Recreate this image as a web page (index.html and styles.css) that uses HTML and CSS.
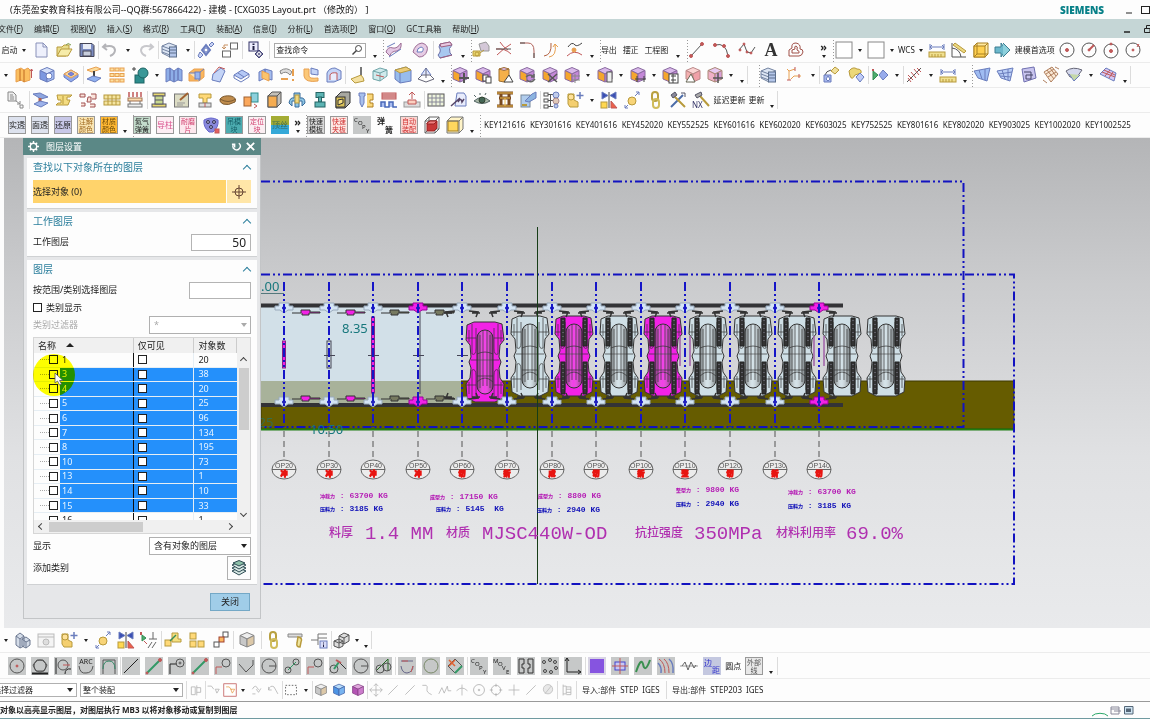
FILE: index.html
```html
<!DOCTYPE html>
<html lang="zh-CN">
<head>
<meta charset="utf-8">
<title>建模 - CXG035 Layout.prt</title>
<link rel="stylesheet" href="styles.css">
</head>
<body>
<header class="titlebar">
  <h1 class="title">(东莞盈安教育科技有限公司--QQ群:567866422) - 建模 - [CXG035 Layout.prt （修改的） ]</h1>
  <span class="brand">SIEMENS</span>
  <button class="win" aria-label="最小化"><svg viewBox="0 0 10 10"><path d="M2 8H8" stroke="#222"/></svg></button>
  <button class="win" aria-label="最大化"><svg viewBox="0 0 10 10"><rect x="1.500" y="1.500" width="8" height="7" fill="none" stroke="#222"/></svg></button>
</header>
<nav class="menubar">
  <a href="#">文件(<u>F</u>)</a><a href="#">编辑(<u>E</u>)</a><a href="#">视图(<u>V</u>)</a><a href="#">插入(<u>S</u>)</a><a href="#">格式(<u>R</u>)</a><a href="#">工具(<u>T</u>)</a><a href="#">装配(<u>A</u>)</a><a href="#">信息(<u>I</u>)</a><a href="#">分析(<u>L</u>)</a><a href="#">首选项(<u>P</u>)</a><a href="#">窗口(<u>O</u>)</a><a href="#">GC工具箱</a><a href="#">帮助(<u>H</u>)</a>
  <span class="spacer"></span>
  <button class="win" aria-label="最小化文档"><svg viewBox="0 0 10 10"><path d="M2 8H8" stroke="#222" stroke-width="1.500"/></svg></button>
  <button class="win" aria-label="还原文档"><svg viewBox="0 0 10 10"><path d="M1.500 4.500H7V8.500H1.500ZM3.500 4V1.500H9.500V6H7" fill="none" stroke="#222"/></svg></button>
</nav>

<div class="bar bar1">
  <div class="group" data-tools="=启动 v new open save"></div>
  <div class="group" data-tools="undo v redo"></div>
  <div class="group" data-tools="layers v"></div>
  <div class="group" data-tools="orient window"></div>
  <div class="group" data-tools="info"></div>
  <div class="group find">
    <label class="search"><input type="text" value="查找命令" aria-label="查找命令"><svg viewBox="0 0 12 12"><circle cx="7.500" cy="4.500" r="3" fill="none" stroke="#444"/><path d="M5.500 6.500L1.500 10.500" stroke="#444" stroke-width="1.500"/></svg></label>
    <button class="caret low" aria-label="更多"></button>
  </div>
  <div class="group grip" data-tools="sheet ring"></div>
  <div class="group" data-tools="sweep V"></div>
  <div class="group grip" data-tools="trim cross corner offset curves V"></div>
  <div class="group grip" data-tools="=导出 =摆正 =工程图 V"></div>
  <div class="group grip" data-tools="line arc spline letter profile . »"></div>
  <div class="group grip" data-tools="blank v blank v =WCS v ruler angle bbox goto =建模首选项 circ1 circ2 circ3 circ4"></div>
</div>
<div class="bar bar2">
  <div class="group" data-tools="v extrude hole pocket"></div>
  <div class="group" data-tools="datum pattern unite v book block draft slab divide sew blend shell"></div>
  <div class="group" data-tools="bend step wall cone V"></div>
  <div class="group grip" data-tools="cubeMove cubeCopy cylinder cubeTurn cubeCut cubeTrim v cubeBox v cubeDim v cubeSwap cubePink cubePlus v V"></div>
  <div class="group edge"></div>
  <div class="group grip" data-tools="layers axes v"></div>
  <div class="group" data-tools="wave link"></div>
  <div class="group" data-tools="play v"></div>
  <div class="group" data-tools="comb v ruler V"></div>
  <div class="group grip" data-tools="surf1 surf2 surf3 surf4 surf5 v surf6 V"></div>
  <div class="group edge"></div>
</div>
<div class="bar bar3">
  <div class="group" data-tools="doc"></div>
  <div class="group" data-tools="press strip parts plates burner"></div>
  <div class="group" data-tools="frame sheetEdit tee puck swap mold clamp pin die bolt mesh lift"></div>
  <div class="group" data-tools="grid edit eye gate brush"></div>
  <div class="group" data-tools="tree add v mirror move chain tools hammer =延迟更新 =更新 V"></div>
  <div class="group edge"></div>
</div>
<div class="bar bar4">
  <div class="group" data-tools=". t1 t2 t3 t4 t5 V"></div>
  <div class="group grip" data-tools="t6 t7 t8 dots t9 t10 t11 »"></div>
  <div class="group grip" data-tools="t12 t13 copyT t14 t15 redcube goldcube V"></div>
  <div class="group grip keys" data-tools="=KEY121616 =KEY301616 =KEY401616 =KEY452020 =KEY552525 =KEY601616 =KEY602020 =KEY603025 =KEY752525 =KEY801616 =KEY802020 =KEY903025 =KEY1002020 =KEY1002525"></div>
</div>

<main class="canvas">
  <svg class="cad" id="cad" viewBox="0 138 1150 490" preserveAspectRatio="xMinYMin meet" role="img" aria-label="CXG035 料带排样">
    <defs>
      <linearGradient id="dome"><stop offset="0" stop-color="#333" stop-opacity=".65"/><stop offset=".45" stop-color="#fff" stop-opacity=".12"/><stop offset="1" stop-color="#333" stop-opacity=".6"/></linearGradient>
      <g id="part" stroke="#333">
        <path d="M-18-37L-11-40H10L17-38L19-22L15-17L14-5L16 0L14 6L15 16L19 22L18 36L10 40H-10L-18 36L-19 22L-15 16L-14 6L-16 0L-14-5L-15-17L-19-22Z" fill="currentColor"/>
        <path d="M-14-2H14M-19-24H-9M9-24H18M-19 23H-9M9 23H18M-13-38V-8Q-9-6-9-14V-34M13-38V-8Q9-6 9-14V-34M-13 36V8Q-9 6-9 14V34M13 36V8Q9 6 9 14V34M-16-32V-20M16-32V-20M-16 20V32M16 20V32" fill="none" stroke-width=".700"/>
        <rect x="-8" y="-32" width="16" height="64" rx="8" fill="url(#dome)"/>
        <path d="M-5-27V26M-2-31V24M2-31V24M5-27V26M-8-8Q0-12 8-8M-8 14H8M-8 20Q0 12 8 20" fill="none" stroke-width=".700"/>
      </g>
      <g id="ribs" stroke="#222" fill="#333"><path d="M-13-38H-9V-10H-13ZM9-38H13V-10H9ZM-13 6H-9V38H-13ZM9 6H13V38H9Z"/><path d="M-11-36V-12M11-36V-12M-11 8V36M11 8V36" stroke="#889" stroke-dasharray="1 3"/></g>
    </defs>
    <path d="M261 381H1014V429H261Z" fill="#665c00" stroke="#3c3800"/>
    <path d="M261 306H461V381H261Z" fill="#d2e0e8"/>
    <path d="M261 381H461V404H261Z" fill="#a8b29a"/>
    <path d="M261 429.500H1014" stroke="#1f7d12" stroke-width="2"/>
    <path d="M261 305.500H843M261 405H843" stroke="#333336" stroke-width="4"/>
    <g id="parts"></g>
    <g id="stations"></g>
    <g class="dashdot"><path d="M261 181.500H963.500V427H261"/><path d="M261 274.500H1014V584H261"/></g>
    <path d="M537.500 227V584" stroke="#173d17"/>
    <path d="M261 293.500H284" stroke="#55787c"/>
    <g class="dim"><text x="261" y="291">.00</text><text x="342" y="333">8.35</text><text x="310" y="434">10.50</text><text x="255" y="427" opacity=".6">.25</text></g>
    <g class="force">
      <text x="320" y="498"><tspan class="cn">冲裁力</tspan> : 63700 KG</text><text x="430" y="499"><tspan class="cn">成型力</tspan> : 17150 KG</text><text x="538" y="498"><tspan class="cn">成型力</tspan> : 8800 KG</text><text x="676" y="492"><tspan class="cn">整型力</tspan> : 9800 KG</text><text x="788" y="494"><tspan class="cn">冲裁力</tspan> : 63700 KG</text>
    </g>
    <g class="force blue">
      <text x="320" y="511"><tspan class="cn">压料力</tspan> : 3185 KG</text><text x="436" y="511"><tspan class="cn">压料力</tspan> : 5145&#160; KG</text><text x="537" y="512"><tspan class="cn">压料力</tspan> : 2940 KG</text><text x="676" y="506"><tspan class="cn">压料力</tspan> : 2940 KG</text><text x="788" y="508"><tspan class="cn">压料力</tspan> : 3185 KG</text>
    </g>
    <g class="spec">
      <text class="cn" x="329" y="537">料厚</text><text x="365" y="539">1.4 MM</text><text class="cn" x="446" y="537">材质</text><text x="482" y="539">MJSC440W-OD</text><text class="cn" x="635" y="537">抗拉强度</text><text x="694" y="539">350MPa</text><text class="cn" x="776" y="537">材料利用率</text><text x="846" y="539">69.0%</text>
    </g>
  </svg>

  <section class="dialog" aria-label="图层设置">
    <header class="dlg-head">
      <svg viewBox="0 0 12 12"><circle cx="6" cy="6" r="3.500" fill="none" stroke="#fff" stroke-width="1.500"/><path d="M6 0V2.500M6 9.500V12M0 6H2.500M9.500 6H12M2 2L3.500 3.500M8.500 8.500L10 10M10 2L8.500 3.500M3.500 8.500L2 10" stroke="#fff" stroke-width="1.500"/></svg>
      <h2>图层设置</h2>
      <button aria-label="重置"><svg viewBox="0 0 12 12"><path d="M8.500 2.500A4 4 0 1 1 2.500 4M4 7V3.500H1" fill="none" stroke="#fff" stroke-width="1.500"/></svg></button>
      <button aria-label="关闭窗口"><svg viewBox="0 0 12 12"><path d="M2 2L10 10M10 2L2 10" stroke="#fff" stroke-width="2"/></svg></button>
    </header>
    <div class="panel">
      <h3>查找以下对象所在的图层<i></i></h3>
      <div class="pick"><button class="pick-label">选择对象 (0)</button><button class="pick-icon" aria-label="点选"><svg viewBox="0 0 16 16"><circle cx="8" cy="8" r="4" fill="none" stroke="#643"/><path d="M8 1V15M1 8H15" stroke="#643"/></svg></button></div>
    </div>
    <div class="panel">
      <h3>工作图层<i></i></h3>
      <div class="field"><label for="work">工作图层</label><input id="work" class="num" type="text" value="50"></div>
    </div>
    <div class="panel">
      <h3>图层<i></i></h3>
      <div class="field"><label for="range">按范围/类别选择图层</label><input id="range" type="text"></div>
      <label class="check"><input type="checkbox">类别显示</label>
      <div class="field dim-field"><label for="filter">类别过滤器</label><span class="pick-list"><select id="filter" disabled><option>*</option></select></span></div>
      <div class="list">
        <div class="rows">
          <table>
            <thead><tr><th>名称 <b class="up"></b></th><th>仅可见</th><th>对象数</th></tr></thead>
            <tbody id="layers"></tbody>
          </table>
        </div>
        <div class="vscroll"><i class="chev"></i><span></span><i class="chev down"></i></div>
        <div class="hscroll"><i class="chev left"></i><span></span><i class="chev right"></i></div>
        <div class="spot"></div>
        <svg class="pointer" viewBox="0 0 10 14"><path d="M1 1V11L3.500 9L5.500 13L7.500 12L5.500 8.500H9Z" fill="#fff" stroke="#555" stroke-width=".800"/></svg>
      </div>
      <div class="field"><label for="show">显示</label><span class="pick-list"><select id="show"><option>含有对象的图层</option></select></span></div>
      <div class="field add"><label for="addcat">添加类别</label><button id="addcat" class="stack"><svg viewBox="0 0 18 18"><g fill="#d8e8e4" stroke="#2c4a52"><path d="M2 12L9 9L16 12L9 16Z"/><path d="M2 9L9 6L16 9L9 13Z"/><path d="M2 6L9 3L16 6L9 10Z"/><path d="M3 4L9 1.500L15 4L9 7Z" fill="#8cc0a8"/></g></svg></button></div>
    </div>
    <footer><button class="close">关闭</button></footer>
  </section>
</main>

<div class="bar barA">
  <div class="group" data-tools="v assembly tab add v move mirror constrain"></div>
  <div class="group" data-tools="place blocks steps"></div>
  <div class="group" data-tools="graycube"></div>
  <div class="group" data-tools="chain chain2 fork"></div>
  <div class="group" data-tools="cubes v V"></div>
  <div class="group edge"></div>
</div>
<div class="bar barB">
  <div class="group" data-tools=". k1 k2 k3 k4 k5"></div>
  <div class="group" data-tools="k6 k7 k8 k7 k9 k10 k11 k12 k9 k13 k11 k14"></div>
  <div class="group" data-tools="k15 k16 k17"></div>
  <div class="group" data-tools="copyT moveT k18 k19 k20"></div>
  <div class="group" data-tools="violet k21 k22 k23 k24 side =圆点 t16 V"></div>
  <div class="group edge"></div>
</div>
<div class="bar barC">
  <span class="combo"><select aria-label="选择过滤器"><option>选择过滤器</option></select></span>
  <span class="combo"><select aria-label="范围"><option>整个装配</option></select></span>
  <div class="group small" data-tools="m1"></div>
  <div class="group small" data-tools="m2 m3 v m4 m5"></div>
  <div class="group small" data-tools="m6 v"></div>
  <div class="group small" data-tools="graycube bluecube pinkcube"></div>
  <div class="group small" data-tools="m7 m8 m8 m9 m10 m11 m12 m13 m14 m8 m15"></div>
  <div class="group small" data-tools="m16"></div>
  <div class="group start" data-tools="=导入:部件 =STEP =IGES"></div>
  <div class="group start" data-tools="=导出:部件 =STEP203 =IGES"></div>
</div>
<footer class="status">
  <span>对象以高亮显示图层，对图层执行 MB3 以将对象移动或复制到图层</span>
  <svg viewBox="0 0 44 14"><path d="M2 13A9 5 0 0 1 18 13" fill="none" stroke="#2ca86a"/><path d="M21 4H29V11H21ZM21 6H29M24 8H31" fill="none" stroke="#889"/><path d="M34.500 3.500H43V11H34.500Z" fill="#cfe4f2" stroke="#567"/><path d="M36 5.500H41V9H36Z" fill="#567"/></svg>
</footer>
<script src="app.js"></script>
</body>
</html>
```
FILE: styles.css
```css
* { box-sizing: border-box; }
body {
  margin: 0;
  height: 100vh;
  display: flex;
  flex-direction: column;
  overflow: hidden;
  background: #fdfdfd;
  color: #222;
  font: 8px/12px "Noto Sans", "Noto Sans CJK SC", sans-serif;
}
button, input, select { font: inherit; color: inherit; }
button { border: 0; background: none; padding: 0; }
h1, h2, h3 { margin: 0; font-weight: 400; }
svg { display: block; }

.titlebar { display: flex; align-items: center; height: 19px; flex: none; padding-left: 10px; }
.title { flex: 1; font-size: 9px; color: #111; }
.brand { color: #078088; font: 800 10px/12px "Open Sans", sans-serif; padding-right: 17px; }
.win { width: 16px; height: 12px; }
.win svg { width: 10px; height: 10px; margin: auto; }
.titlebar .win:last-child { margin-right: -3px; }
.menubar { display: flex; align-items: center; gap: 11px; height: 19px; flex: none; background: #c5d6d6; }
.menubar a { color: #222; text-decoration: none; white-space: nowrap; }
.menubar a:first-child { margin-left: -2px; }
.menubar .spacer { flex: 1; }
.menubar .win { margin-right: -6px; }

.bar { display: grid; height: 25px; flex: none; border-bottom: 1px solid #ececec; }
.bar1 { grid-template-columns: 98px 60px 36px 48px 27px 112px 52px 36px 129px 87px 146px 1fr; }
.bar2 { grid-template-columns: 83px 262px 104px 298px 10px 62px 49px 35px 67px 160px 1fr; }
.bar3 { grid-template-columns: 29px 118px 277px 116px 237px 1fr; }
.bar4 { grid-template-columns: 131px 173px 174px 1fr; }
.barA { grid-template-columns: 161px 72px 28px 70px 40px 1fr; }
.barB { grid-template-columns: 120px 275px 72px 118px 192px 1fr; height: 26px; }
.barC { grid-template-columns: 80px 106px 19px 77px 30px 55px 190px 19px 90px 1fr; height: 22px; border: 0; }
.group {
  display: flex;
  align-items: center;
  justify-content: space-around;
  min-width: 0;
  background: linear-gradient(#dcdcdc, #dcdcdc) left / 1px 18px no-repeat;
}
.group:first-child { background: none; }
.bar1 .group:last-child { padding: 0 6px 0 2px; }
.group.grip { background: radial-gradient(circle, #999 1px, transparent 1px) 1px 4px / 3px 3px repeat-y; }
.group.start { justify-content: flex-start; gap: 4px; padding-left: 6px; }
.group.keys { justify-content: space-between; padding: 0 19px 0 6px; }
.tool { width: 20px; height: 20px; flex: none; display: grid; place-items: center; }
.tool svg { width: 18px; height: 18px; }
.small .tool { width: 15px; }
.small .tool svg { width: 14px; height: 14px; }
.label { white-space: nowrap; flex: none; }
.caret { width: 8px; height: 12px; flex: none; display: grid; place-items: center; }
.caret::after { content: ""; border: 2px solid transparent; border-top: 3px solid #222; border-bottom: 0; }
.caret.low { align-self: flex-end; }
.over { display: flex; flex-direction: column; align-items: center; width: 10px; line-height: 8px; font-weight: 700; font-size: 11px; }
.over::after { content: ""; margin-top: 4px; border: 2px solid transparent; border-top: 3px solid #222; border-bottom: 0; }
.gap { width: 3px; }
.find { padding-left: 3px; }
.search { display: flex; align-items: center; width: 92px; height: 15px; border: 1px solid #aaa; background: #fff; }
.search input { flex: 1; min-width: 0; border: 0; padding: 0 1px; background: none; }
.search svg { width: 12px; height: 12px; margin-right: 2px; }

.canvas {
  position: relative;
  flex: 1;
  min-height: 0;
  overflow: hidden;
  border-left: 4px solid #fcfcfc;
  background: linear-gradient(#b4b5b7, #cbccce 30%, #e0e1e3 65%, #e9eaec);
}
.cad { position: absolute; left: -4px; top: 0; width: calc(100% + 4px); height: 100%; }
.dashdot { fill: none; stroke: #1212c0; stroke-width: 2; stroke-dasharray: 9 3 2 3 2 3; }
.dim { font: 13px "Noto Sans", sans-serif; fill: #17777c; }
.force { font: 700 8px "Liberation Mono", "Noto Sans CJK SC", monospace; fill: #b51db5; }
.force.blue { fill: #1010b8; }
.force .cn { font: 900 5px "Noto Sans CJK SC", sans-serif; }
.spec { font: 19px "Liberation Mono", monospace; fill: #b030b0; }
.spec .cn { font: 500 12px "Noto Sans CJK SC", sans-serif; }
.opname { font: 7px "Liberation Sans", sans-serif; fill: #555; text-anchor: middle; }
.opkind { font: 900 7px "Noto Sans CJK SC", sans-serif; fill: #e81410; stroke: #e81410; stroke-width: 1; text-anchor: middle; }

.dialog { position: absolute; left: 19px; top: 0; width: 238px; background: #e6e7e9; border: 1px solid #c3c5c7; border-top: 0; font-size: 9px; }
.dlg-head { display: flex; align-items: center; gap: 3px; height: 17px; margin: 0 -1px; padding: 0 5px; background: #5b8886; color: #fff; }
.dlg-head h2 { flex: 1; font-size: 9px; padding-left: 4px; }
.dlg-head svg { width: 11px; height: 11px; }
.panel { margin: 3px 3px 0; padding: 0 6px 5px; background: #fdfdfd; border-bottom: 1px solid #cfd1d3; }
.panel h3 { display: flex; align-items: center; justify-content: space-between; height: 18px; font-size: 10px; color: #2c7f9c; }
.panel h3 i { width: 6px; height: 6px; margin: 4px 1px 0; border: solid #2c7f9c; border-width: 1px 0 0 1px; transform: rotate(45deg); }
.pick { display: flex; gap: 1px; height: 23px; margin-top: 4px; }
.pick-label { flex: 1; text-align: left; background: #ffd36b; }
.pick-icon { width: 24px; background: #ffe6a8; }
.pick-icon svg { width: 16px; height: 16px; margin: auto; }
.field { display: flex; align-items: center; justify-content: space-between; height: 18px; margin-top: 3px; }
.field input { width: 62px; height: 17px; border: 1px solid #b4b4b4; background: #fff; }
.field .num { width: 60px; font-size: 12px; text-align: right; padding: 0 4px; }
.check { display: flex; align-items: center; gap: 4px; height: 17px; }
input[type="checkbox"] { appearance: none; width: 9px; height: 9px; margin: 0; border: 1px solid #222; background: #fff; }
.dim-field { color: #aaa; margin: 0 0 3px; }
.pick-list, .combo { position: relative; display: block; }
.pick-list { width: 102px; }
.pick-list select, .combo select { appearance: none; width: 100%; height: 18px; padding: 0 4px; border: 1px solid #b0b0b0; border-radius: 0; background: #fff; opacity: 1; }
.pick-list::after, .combo::after { content: ""; position: absolute; right: 4px; top: 7px; border: 3px solid transparent; border-top: 4px solid #222; border-bottom: 0; pointer-events: none; }
.dim-field .pick-list::after { border-top-color: #aaa; }
.combo { align-self: center; height: 14px; margin-right: 3px; }
.combo select { height: 14px; padding: 0 2px; display: block; }
.combo::after { top: 5px; }
.combo:first-child { margin-left: -10px; }

.list { position: relative; display: grid; grid-template-columns: 1fr 13px; border: 1px solid #d6d6d6; }
.rows { height: 182px; overflow: hidden; }
table { width: 100%; height: 190px; border-collapse: collapse; table-layout: fixed; }
th { height: 15px; padding: 0 0 0 4px; background: #f0f0f0; font-weight: 400; text-align: left; border-right: 1px solid #ccc; line-height: 12px; }
th:nth-child(1) { width: 49%; }
th:nth-child(2) { width: 30%; }
.up { display: inline-block; margin: 0 0 2px 8px; border: 4px solid transparent; border-bottom-color: #222; border-top: 0; }
td { padding: 0 4px; line-height: 12px; border-bottom: 1px solid #e6eef4; }
td:first-child { padding: 0; border-right: 1px solid #111; }
td:nth-child(2) { border-right: 1px solid #e6eef4; }
td input { display: block; }
.node { display: flex; align-items: center; padding-left: 6px; }
.node::before { content: ""; width: 9px; border-top: 1px dotted #aaa; }
.node label { flex: 1; margin-left: 1px; padding-left: 3px; }
.sel { color: #e8f4ff; }
.sel td:first-child { background: linear-gradient(#2490fb, #2490fb) 26px 0 no-repeat; }
.sel td:nth-child(n+2) { background: #2490fb; }
.vscroll, .hscroll { display: flex; align-items: center; justify-content: space-between; background: #f0f0f0; }
.vscroll { flex-direction: column; padding: 20px 0 4px; }
.vscroll span { width: 10px; height: 62px; margin-bottom: 76px; background: #cdcdcd; }
.hscroll { grid-column: 1 / 3; height: 13px; padding: 0 18px 0 5px; }
.hscroll span { width: 94px; height: 10px; margin-right: 80px; background: #cdcdcd; }
.chev { width: 5px; height: 5px; border: solid #444; border-width: 1px 0 0 1px; transform: rotate(45deg); }
.chev.down { transform: rotate(225deg); }
.chev.left { transform: rotate(-45deg); }
.chev.right { transform: rotate(135deg); }
.spot { position: absolute; left: -1px; top: 16px; width: 42px; height: 42px; border-radius: 50%; background: #ff0; mix-blend-mode: multiply; }
.pointer { position: absolute; left: 20px; top: 34px; width: 10px; height: 14px; }
.add { height: 23px; margin-top: 1px; }
.stack { width: 24px; height: 24px; border: 1px solid #b0b0b0; }
.stack svg { width: 18px; height: 18px; margin: auto; }
.dialog footer { display: flex; justify-content: flex-end; padding: 8px 10px 7px; }
.close { width: 40px; height: 18px; background: #a0cde8; border: 1px solid #74a8c6; }

.status { display: flex; align-items: center; justify-content: space-between; height: 18px; flex: none; border-top: 1px solid #999; border-bottom: 1px solid #6f9aa0; font-weight: 700; }
.status svg { width: 44px; height: 14px; margin-right: 16px; }
```
FILE: app.js
```js
const p = (d, s = '#555', f = 'none', w = 1) => `<path d="${d}" stroke="${s}" fill="${f}" stroke-width="${w}"/>`;
const c = (x, y, r, s = '#555', f = 'none', w = 1) => `<circle cx="${x}" cy="${y}" r="${r}" stroke="${s}" fill="${f}" stroke-width="${w}"/>`;
const r = (x, y, w, h, s = '#555', f = 'none') => `<rect x="${x}" y="${y}" width="${w}" height="${h}" stroke="${s}" fill="${f}"/>`;
const cube = (t, a, b, s = '#777') => p('M9 1.500L16 4.500L9 8L2 4.500Z', s, t) + p('M2 4.500L9 8V16L2 13Z', s, a) + p('M9 8L16 4.500V13L9 16Z', s, b);
const ocube = x => cube('#d9b8ea', '#f5a62c', '#c488d8', '#8a6aa0') + x;
const tile = x => r(0, 0, 18, 18, 'none', '#c6c8c8') + x;
const word = (bg, fg, a, b, line = '#999') => r(.5, .5, 17, 17, line, bg) + (b
  ? `<text x="9" y="8" font-size="7" text-anchor="middle" fill="${fg}">${a}</text><text x="9" y="16" font-size="7" text-anchor="middle" fill="${fg}">${b}</text>`
  : `<text x="9" y="12" font-size="8" text-anchor="middle" fill="${fg}">${a}</text>`);
const B = '#6a7dbd', O = '#e8a050', G = '#b89a3c', R = '#c05858', T = '#2c8c8c', L = '#c4d4f7';

const icons = {
  new: p('M4 2H11L15 6V16H4Z', '#8890b8', '#eef0fc') + p('M11 2V6H15', '#8890b8'),
  open: p('M2 6H7L9 4H14V8L11 15H2Z', G, '#e8dc8c') + p('M2 15L6 8H17L13 15Z', G, '#f6ecaa') + p('M11 4Q13 1 16 4', '#7a9a4a'),
  save: p('M2 2.500H14L16 4.500V15.500H2Z', '#445', '#7c8cc0') + r(5, 3, 8, 5, 'none', '#e8ecf6') + r(5, 10, 8, 5, '#445', '#c8cedc'),
  undo: p('M5 3L2 6L6 9M2.500 6Q13 3 14 9Q14 13 9 15', '#b4b4b8', 'none', 2),
  redo: p('M13 3L16 6L12 9M15.500 6Q5 3 4 9Q4 13 9 15', '#c8c8cc', 'none', 2),
  layers: p('M1 5L8 2L16 5L9 8ZM1 8L9 11M1 11L9 14M1 5V12L9 16V8', '#7282a0', '#dde6f4') + r(8.5, 6, 7, 10, '#5c6f8c', '#b4c6ea') + p('M9 9H15M9 12H15', '#5c6f8c'),
  orient: p('M5 9L9 4L13 9L9 14Z', B, '#aab8e8', 2) + c(9, 9, 2, B, '#fff') + p('M1 15L3 11L6 14L3 17ZM12 4L15 1L17 3L14 6Z', B, '#c8d2f4'),
  window: r(9.5, 2, 7, 6, '#666', '#fff') + r(1.5, 10, 8, 6, '#666', '#fff') + p('M3 8V4H7M5 6L3 8L1 6', '#c89060'),
  info: r(2, 1, 9, 9, '#336', '#eef') + p('M6.500 2.500V4M6.500 5V9', '#224', 'none', 2) + p('M8 13L12 9L16 13L12 17Z', '#447', '#88a') + c(12, 13, 1.5, '#fff', '#447'),
  sheet: p('M1 11Q3 5 8 7Q12 8 16 2Q17 8 12 10Q6 10 5 15Z', '#9c6c94', '#e4c8e4') + p('M2 6L10 2M4 16L16 8', B),
  ring: p('M2 11Q4 3 11 2Q18 4 16 10Q14 16 8 16Z', '#9c6c94', '#e6cce4') + p('M6 11Q6 7 10 6Q14 7 11 11Z', B, '#fff'),
  sweep: p('M4 3L14 1L16 4Q12 7 14 12L16 14L4 17L2 14Q6 10 3 6Z', '#6d6fa8', '#a8c8f0') + p('M4 3L14 1L16 4L5 6ZM4 17L16 14', '#a06080', '#e8c8e0'),
  trim: p('M7 3L14 1L17 5V10H9Z', '#999', '#d4c8d8') + p('M1 10H8V15H1ZM8 12L12 9', G, '#ecd870') + c(5, 13, 2, G),
  cross: p('M1 8Q10 7 16 13M16 3Q9 7 2 14M5 1Q8 6 13 9', R) + p('M1 8H16', '#555'),
  corner: p('M1 2H9Q15 2 15 10V17', '#b06058') + p('M1 2H6M15 12V17', '#555'),
  offset: p('M2 15Q10 14 9 2', '#b06040') + p('M7 16Q15 15 13 3M11 6L13 3L16 6', O),
  curves: p('M2 6Q6 0 9 4Q11 6 16 2', '#444') + p('M1 15Q8 8 16 14', R) + c(8, 9, 2, O, O),
  line: p('M3 15L14 3', '#555') + c(3, 15, 1.5, R, R) + c(14, 3, 1.5, R, R),
  arc: p('M2 4Q13 1 15 15', '#555') + c(2, 4, 1.5, R, R) + c(11, 5, 1.5, R, R) + c(15, 15, 1.5, R, R),
  spline: p('M1 9L6 3L9 11L13 12L17 6', '#555') + c(6, 3, 1, R, R) + c(9, 11, 1, R, R) + c(13, 12, 1, R, R) + c(2, 9, 1, R, R),
  letter: '<text x="9" y="15" font-size="18" font-weight="700" text-anchor="middle" fill="#333" font-family="Liberation Serif">A</text>',
  profile: p('M2 15V9L5 7Q4 2 9 2Q14 3 13 8Q16 8 16 11Q15 15 12 15Z', '#a05048') + p('M5 12V9L8 8Q7 5 9 5Q11 5 10 9Q13 10 12 12Z', '#a05048'),
  blank: r(1, 1, 16, 16, '#888', '#fff'),
  ruler: p('M2 6H16M2 3V9M16 3V9M4 4L2 6L4 8M14 4L16 6L14 8', B) + r(1, 11, 16, 5, G, '#f0e090') + p('M4 13V16M7 13V16M10 13V16M13 13V16', G),
  angle: p('M2 2V16H16M2 7Q10 8 11 16', '#555') + p('M5 2L16 10L14 12L3 4Z', G, '#ecd880'),
  bbox: p('M2 5L5 2H16V13L13 16H2Z', '#a98020', '#ffe9a0') + r(2, 5, 11, 11, '#a98020', '#ffd050') + p('M13 5L16 2M5 2V13H16M5 13L2 16', '#a98020'),
  goto: p('M1 6H7V2L12 9L7 16V12H1Z', '#3c7c90', '#6cb8cc') + p('M9 2L16 9L9 16', '#3c7c90', '#8cd0dc'),
  circ1: c(9, 9, 7) + c(9, 9, 1.5, R, R), circ2: c(9, 9, 7) + p('M9 9L14 4', R, 'none', 2) + c(9, 9, 1, R, R),
  circ3: c(9, 10, 7) + c(9, 10, 1.5, R, R) + c(9, 3, 1, R, R), circ4: c(9, 9, 7) + c(9, 9, 1, R, R) + p('M13 3L16 6M15 3L13 6', R),
  extrude: p('M1 4L6 2L9 4L13 2L15 4V14L9 16L6 14L1 16Z', O, '#fbbf60') + p('M5 3V15M9 4V16', '#c06a20') + p('M16.500 12V3M15 5L16.500 3L18 5', R),
  hole: cube('#d4e0fa', '#7c98e0', '#a8c0f4', B) + c(11, 10, 3, B, '#fff'),
  pocket: p('M2 8L9 4L16 8V11L9 16L2 11Z', B, '#8ea8ee') + p('M2 8L9 4L16 8L9 12Z', O, '#fbd49c') + p('M6 8L9 6L12 8L9 10Z', B, '#7d7de0'),
  datum: p('M2 4L11 1L16 3L7 6Z', O, '#fcdc9c') + p('M9 5V11', '#444', 'none', 2) + p('M2 13L8 10L16 12L10 16Z', B, '#8eb0f0'),
  pattern: [2, 7, 12].map(x => r(x, 2, 4, 3, O, '#fde0a0') + r(x, 7.5, 4, 3, O, '#fde0a0') + r(x, 13, 4, 3, O, '#fde0a0')).join(''),
  unite: r(4, 9, 9, 8, '#1c6464', '#2c8c8c') + c(12, 7, 5, '#1c6464', '#3a9898') + p('M1 3H5M3 1V5', '#444'),
  book: p('M1 3L5 2V14L1 16ZM5 2L9 5V16L5 14ZM9 5L13 2V14L9 16ZM13 2L17 4V15L13 14Z', B, '#8eaee8'),
  block: p('M1 7L6 3H16V11L11 15H1Z', O, '#fbb65c') + p('M1 7H11V15M11 7L16 3', B, '#fde4b8') + r(7, 6, 5, 7, B, '#9ab6ee'),
  draft: p('M3 8L11 2L15 5L10 16L2 14Z', B, L) + p('M9 1L15 3M9 1L4 7', R),
  slab: p('M1 9L9 4L16 8L8 13Z', B, '#b4c8f6') + p('M1 9V12L8 16L16 11V8M5 7L11 11', B),
  divide: p('M3 6L9 3V12L3 15ZM9 3L16 5V14L9 12Z', B, '#a4bcee') + p('M6 5L13 8V15L6 12Z', O, '#fbc46c'),
  sew: p('M1 5Q8 0 13 6L11 9Q7 4 2 8Z', '#888', '#ddd') + p('M2 13H9M14 3V10M14 13V15', O, 'none', 2),
  blend: p('M2 3H7V10Q7 13 16 12V15Q3 17 2 10Z', O, '#fbc878') + p('M9 2L16 4V9L9 8Z', B, L),
  shell: p('M2 7Q4 2 10 2L16 5V13L9 16H2Z', B, L) + p('M5 14V9Q6 6 12 7V14', R, '#e8ecfc'),
  bend: p('M3 13L13 9Q16 12 16 15L7 17Z', G, '#f4e0a0') + p('M13 9V1', '#777', 'none', 2),
  step: p('M2 5L9 2L16 4V10L9 15L2 13Z', '#6fa4a8', '#cfeaec') + p('M2 5L9 7L16 4M9 7V15', '#6fa4a8') + p('M5 9L13 11', R),
  wall: p('M1 4L12 1L17 4V15L6 17L1 13Z', B, '#98bcec') + p('M1 4L12 1L17 4L6 7Z', G, '#eccc78') + p('M6 7V17', B),
  cone: p('M4 9L9 2L14 9', B, '#dfe6ff') + p('M9 2V12M1 13L5 9H13L17 13L9 16Z', '#667'),
  cubeMove: ocube(p('M8 12H18M13 7V17', '#555', 'none', 2)), cubeCopy: ocube(r(9, 9, 5, 6, '#444', '#fff') + r(12, 11, 5, 6, '#444', '#fff')),
  cylinder: p('M3 3V15Q8 17 13 15V3Z', '#a07030', '#f5b04a') + p('M3 3Q8 0 13 3Q8 6 3 3', '#a07030', '#d9b8ea') + p('M8 16L13 9L17 16Z', '#444', '#fff'),
  cubeTurn: ocube(p('M8 11Q12 7 16 11M16 8V11H13M17 13Q13 18 9 14', '#666', 'none', 1.5)), cubeCut: ocube(p('M7 8L16 16M16 8L7 16', '#555', 'none', 1.5)),
  cubeTrim: ocube(p('M8 10H17M8 14H17M12 8V17', '#888', '#fff')), cubeBox: ocube(r(11, 6, 5, 10, '#555', '#eee')), cubeDim: ocube(p('M6 13H17M8 10V16M15 10V16', '#444')),
  cubeSwap: ocube(r(8, 8, 9, 9, '#444', '#fff') + p('M10 10H15M12 8V17M10 14H15', '#444')), cubePlus: cube('#e8c8f0', '#f0b0c8', '#d8a0d8', '#a87') + p('M7 12H17M12 7V17', '#555', 'none', 1.5),
  cubePink: cube('#fbd4d4', '#f4b0b0', '#f0a0a8', '#b88') + p('M2 16L7 8L11 16Z', '#665', '#fff'),
  axes: p('M4 14V5M4 5L10 3M4 5L2 3M9 10H16M9 10L6 13', O) + p('M2 14H6M14 8V12M10 1V5', R),
  wave: p('M9 5L13 1L17 4L13 8Z', G, '#f0e09c') + p('M3 9Q4 5 9 4', '#555') + p('M2 9H9V16H2Z', B, '#a8b8ee') + p('M4 13L6 10L8 13L6 15Z', B, '#fff'),
  link: p('M2 5Q6 0 10 3Q15 3 14 7L8 9Q5 15 3 10Z', G, '#ecd878') + p('M9 11L13 7L17 11L13 16Z', B, '#c0ccf8'),
  play: p('M2 5L7 9L2 14Z', '#348c54', '#4cac6c') + p('M2 5V3', R, 'none', 2) + p('M8 9L12 4L17 9L12 14Z', B, '#98acec'),
  comb: p('M2 16L16 2', '#555') + p('M3 9L8 14M6 6L11 12M9 3L14 9M3 12L6 16M12 2L16 6', R),
  surf1: p('M1 5L17 2L14 15L5 12Z', B, '#9fbcf2') + p('M6 4L9 13M12 3L12 14', B),
  surf2: p('M1 5L17 2L14 15L5 12Z', B, '#b9cdf6') + p('M6 4L9 13M12 3L12 14M3 8L16 6M4 10L15 11', B),
  surf3: p('M3 3L15 1L17 12L5 16Z', '#7070b0', '#c8c4ee') + p('M5 6H12V13H7V9H14', '#446'),
  surf4: p('M2 6L10 1L16 8L9 16Z', '#b08060', '#fae8d4') + p('M4 8L12 3M6 11L14 6M5 4L12 13M8 2L14 10M1 14L5 17M13 1L17 3', '#b08060'),
  surf5: p('M1 5Q8 0 17 4L12 11L5 11Z', '#667', '#d4d8ec') + p('M4 8L9 15L15 9', B, '#c4d8a8'),
  surf6: p('M1 8L7 2L17 7L15 15Z', B, '#d4c8f4') + p('M3 6L16 11M5 4L16 9M6 10L11 4M10 12L14 6', R),
  doc: p('M2 1H7L10 4V10H2Z', '#888', '#eee') + p('M4 4H7M4 6H8M4 8H8', '#888') + p('M10 10L14 13M14 10V13H11M14 14H17V17H14Z', '#888'),
  press: p('M1 3L8 2L16 6L9 8Z', B, '#8ea6e0') + p('M8 7V11', '#b06050', 'none', 3) + p('M2 13L8 10L16 12L9 16Z', B, '#9cb2ea'),
  strip: p('M2 4H17L15 6H12V9H15L13 14H1L3 12H6V9H3Z', G, '#f4dc80') + p('M8 5V13', G),
  parts: p('M1 3H6V6H1ZM12 3H17V8H13M2 12H6V15H2M9 6H12V11H8ZM11 13H16V16H11', '#a05050', '#fbe4dc'),
  plates: r(1, 4, 16, 4, G, '#f4e4a0') + r(1, 10, 16, 4, G, '#f4e4a0') + p('M5 4V14M9 4V14M13 4V14', G, 'none', 1),
  burner: p('M3 1V6M7 1V6M11 1V6M15 1V6', R, 'none', 1.5) + r(2, 7, 14, 3, '#a07050', '#fbdcb0') + r(2, 13, 14, 3, '#777', '#eee') + p('M4 10V13M14 10V13', '#777'),
  frame: r(3, 2, 12, 3, '#556', '#e8d870') + r(2, 13, 14, 3, '#556', '#e8d870') + r(5, 5, 8, 8, '#556', '#c8d890') + p('M5 9H13', '#556'),
  sheetEdit: r(1.5, 3, 14, 13, '#777', '#dcdcc4') + p('M4 12H12M4 14H10', '#999') + p('M7 9L15 2', '#a06030', 'none', 2),
  tee: p('M3 3H15V7H11V12H7V7H3Z', G, '#ffd978') + r(3, 12, 12, 4, '#777', '#ddd') + p('M9 12V16', R),
  puck: p('M1 8Q4 4 12 5Q18 7 16 11Q9 15 4 13Q0 11 1 8Z', '#7c5a30', '#c08c4c') + p('M1 8Q9 13 17 8', '#7c5a30'),
  swap: r(9, 2, 7, 9, T, '#8cd0dc') + r(2, 6, 7, 9, '#a06030', '#fba85c') + p('M12 13L15 15L12 17', R),
  mold: p('M3 5L7 1H16V12L12 16H3Z', '#555', '#c4c0b8') + r(3, 5, 9, 11, '#555', '#f5ac50') + p('M12 5L16 1', '#555'),
  clamp: p('M1 12Q2 6 6 7V2H12V7Q17 6 17 12L14 15V10H11V16H7V10H4V15Z', '#386c9c', '#8cc4e4') + r(7, 4, 4, 8, G, '#f0d880'),
  pin: r(5, 1.5, 8, 5, '#246464', '#5cb4b4') + r(7.5, 6, 3, 5, '#246464', '#5cb4b4') + r(4, 11, 10, 5, '#246464', '#5cb4b4'),
  die: p('M2 6L7 1H16V12L11 17H2Z', '#333', '#a8a8a0') + r(2, 6, 9, 10, '#333', '#d8c058') + p('M4 14V9L9 8V12Z', '#333', '#f4dc80'),
  bolt: p('M2 2H8V5H7V12L5 16L3 12V5H2Z', B, '#a8c0ec') + p('M10 3H16V9H13V12H16V16H10', '#b08020', '#fad87c'),
  mesh: r(2, 2, 14, 6, R, '#e4b8b8') + p('M2 4H16M2 6H16', R) + p('M1 16V11H5V16H9V11H13V16H17', '#4868b8', '#a8bcf0', 1.5),
  lift: r(1, 11, 16, 5, '#999', '#ddd') + p('M5 13H13V9H5Z', R, '#fbd0c0') + p('M9 8V1M6 4L9 1L12 4', R),
  grid: r(1, 3, 16, 12, '#555', '#eef4dc') + p('M1 7H17M1 11H17M5 3V15M9 3V15M13 3V15', '#889'),
  edit: p('M7 2H14L16 5V15H5Z', B, '#e8ecfc') + p('M1 15L10 7M8 11Q11 6 12 11L14 8', '#546', 'none', 1.5),
  eye: p('M1 10Q9 3 17 10Q9 15 1 10Z', '#566', '#a8b8a8') + c(9, 9, 3, '#343', '#465') + p('M3 6L1 4M7 4V2M12 4L13 2', '#566'),
  gate: p('M1 2H17M3 7H15M1 15H17M5 2V15M13 2V15', '#7a4a20', 'none', 3) + p('M1 2H17M4 7H14M1 15H17M9 7V15', '#f0c050'),
  brush: r(2, 4, 9, 12, '#789', '#b0ccec') + p('M6 10L13 3L17 1V7L10 11Z', B, '#8cb4e0') + p('M3 14H8', G, 'none', 2),
  tree: r(1, 2, 4, 3, '#555') + r(1, 8, 4, 3, '#555') + r(1, 14, 4, 3, '#555') + p('M5 3.500H10M5 9.500H10M5 15.500H10M7.500 3V15', '#555') + c(13, 4, 3, B, '#c0ccec') + c(13, 10, 3, '#a88', '#e0c8b8') + c(13, 15, 2, B, '#c0ccec'),
  add: p('M2 3H8V9L12 11V16H4L2 13Z', G, '#f4cf70') + c(5, 6, 3, G, '#ffe29a') + p('M14 1V8M10.500 4.500H17.500', B, 'none', 1.5),
  mirror: p('M2 1L8 4.500L2 8ZM16 1L10 4.500L16 8Z', B, '#3c50b4') + r(1, 11, 6, 6, G, '#ffd850') + p('M11 10V17H17Z', R, '#ee6048') + p('M9 1V17', '#444'),
  move: c(9, 10, 4, G, '#f8d478') + p('M12 5L16 1M13 1H16V4M5 14L2 17M2 14V17H5', B),
  chain: '<rect x="6" y="1" width="6" height="9" rx="3" fill="none" stroke="#b8a040" stroke-width="2"/><rect x="7" y="8" width="6" height="9" rx="3" fill="none" stroke="#d0bc5c" stroke-width="2"/>',
  tools: p('M2 16L14 4', '#4c6ca8', 'none', 2) + p('M5 5L16 16', G, 'none', 2) + p('M2 4L6 1L8 4L4 7ZM12 2L16 2M16 2V6', '#556', '#889'),
  hammer: p('M8 5L17 15', G, 'none', 2) + p('M3 4L9 1L10 4L5 7Z', '#556', '#aaa') + '<text x="0" y="17" font-size="8" fill="#336">NX</text>',
  t1: word('#dde2ee', '#222', '实透'), t2: word('#dde2ee', '#222', '面透'), t3: word('#c8c8e8', '#222', '还原'), t4: word('#fae6b4', '#a06a20', '注解', '颜色'), t5: word('#ffb833', '#6b4a08', '材质', '颜色'),
  t6: word('#c4dccc', '#222', '氮气', '弹簧'), t7: word('#fdeef4', '#d8508c', '导柱'), t8: word('#fde8ee', '#d03c6c', '耐磨', '片'), t9: word('#4cacb0', '#145c64', '吊模', '块'), t10: word('#fbeef2', '#d03c6c', '定位', '块'),
  t11: r(0, 0, 18, 9, 'none', '#a4ac34') + r(0, 9, 18, 9, 'none', '#34a8d8') + '<text x="9" y="12" font-size="8" text-anchor="middle" fill="#365">顶丝</text>',
  dots: p('M2 4Q9 0 16 4Q17 11 11 16H7Q1 11 2 4Z', '#66c', '#8888dc') + c(6, 6, 1.5, '#335', '#aac') + c(12, 6, 1.5, '#335', '#aac') + c(9, 11, 1.5, '#335', '#aac') + r(13, 13, 4, 4, R, '#e46060'),
  t12: word('#d8d8d8', '#222', '快速', '模板'), t13: word('#fde8e4', '#d03030', '快速', '夹板'), t14: '<text x="1" y="8" font-size="8" font-weight="700" fill="#222">弹</text><text x="9" y="17" font-size="8" font-weight="700" fill="#222">簧</text>', t15: word('#fbd4d0', '#d03030', '自动', '装配'), t16: word('#e8e8e8', '#555', '外部', '线'),
  side: r(0, 0, 18, 18, 'none', '#c4c8e0') + '<text x="1" y="9" font-size="8" fill="#33c">边</text><text x="9" y="16" font-size="8" fill="#33c">距</text>',
  copyT: tile('<text font-size="6" fill="#222"><tspan x="1" y="6">C</tspan><tspan x="5" y="9">O</tspan><tspan x="9" y="13">P</tspan><tspan x="13" y="17">Y</tspan></text>'),
  moveT: tile('<text font-size="6" fill="#222"><tspan x="0" y="6">M</tspan><tspan x="5" y="9">O</tspan><tspan x="9" y="13">V</tspan><tspan x="13" y="17">E</tspan></text>'),
  redcube: p('M2 5L6 1H16V13L12 17H2ZM2 5H12V17M12 5L16 1M6 1V13H16M6 13L2 17', '#666') + p('M4 7L7 5H14V12L11 15H4Z', '#922', '#c83838') + p('M4 7L7 5H14L11 8H4Z', '#922', '#f08080'),
  goldcube: p('M1 5L5 1H17V13L13 17H1Z', '#777', '#fff4c8') + r(2, 5, 10, 10, '#a07c20', '#ffd75e') + p('M13 5V17M13 5L17 1M1 5H13', '#777'),
  assembly: p('M2 5L6 2L10 5V15L6 17L2 14ZM8 8L12 6L16 9V14L12 17L8 15Z', '#6c7890', '#d4dce8') + p('M2 5L6 8L10 5M6 8V17M8 8L12 11L16 9M12 11V17', '#6c7890'),
  tab: r(1, 3, 16, 13, '#bbb', '#f4f4f4') + p('M1 6H17', '#bbb') + c(9, 11, 3, '#bbb', '#dedede'),
  constrain: p('M2 4L6 7L2 10Z', '#348c54', '#4cac6c') + p('M1 4V1', R, 'none', 2) + p('M9 8H17M13 1V8M8 17L12 11M12 17L16 11', '#666') + p('M4 10L7 13', R),
  place: p('M8 2H14V8H17V11H8Z', G, '#f4e080') + r(1, 9, 6, 6, G, '#ffd978') + p('M6 10L12 4', '#388c58', 'none', 1.5),
  blocks: r(2, 2, 6, 6, G, '#ffd978') + r(2, 10, 6, 6, G, '#ffd978') + r(10, 10, 6, 6, G, '#ffd978'),
  steps: r(11, 1, 5, 5, '#555', '#fff') + r(7, 6, 5, 5, '#a04030', '#fbb860') + r(2, 11, 5, 5, '#555', '#fff'),
  graycube: cube('#eee', '#c8c8c8', '#dcc8a8', '#888'), bluecube: cube('#b8dcfa', '#4c94e4', '#78b4f0', '#46a'), pinkcube: cube('#e0a8dc', '#b454b4', '#cc7ccc', '#848'),
  chain2: p('M1 3H15V6H1Z', '#888', '#ddd') + p('M11 6Q16 7 14 11L13 16Q9 16 10 12Z', G, '#f0e6a0', 1.5),
  fork: p('M1 9H8V3H17M8 9V14M8 7H17', '#777') + r(10, 10, 7, 7, B, '#d8dcf8') + p('M13.500 11.500V12.500M13.500 13.500V16', '#224'),
  cubes: p('M6 5L11 2L16 4V10L11 13L6 11ZM1 10L6 8L10 10V15L6 17L1 15Z', '#555', '#ddd') + p('M6 5L11 7L16 4M11 7V13M1 10L6 12L10 10M6 12V17', '#555'),
  k1: tile(c(9, 9, 7) + c(9, 9, 1, R, R)), k2: tile(p('M6 3H12L16 8L13 14H5L2 8Z') + c(9, 9, 6) + p('M1 16.500H17', '#222', 'none', 2)), k3: tile(c(9, 8, 5) + p('M2 1V17', '#222') + p('M9 8H16', R) + p('M11 17Q11 11 17 12', '#222')),
  k4: tile('<text x="9" y="7" font-size="7" text-anchor="middle" fill="#222">ARC</text>' + p('M2 9Q3 17 9 16Q15 16 16 9')), k5: tile(p('M3 17V3H15V17') + p('M3 12Q3 4 9 4Q15 4 15 12', '#386')), k6: tile(p('M2 16L16 2', '#222')),
  k7: tile(p('M2 16L16 2', '#396', 'none', 2) + c(15, 3, 1.5, R, R) + c(2, 16, 1, R, R)), k8: tile(p('M2 17V7H9', '#222') + c(12, 6, 4) + c(12, 6, 1)), k9: tile(p('M2 17V10H8', R) + c(12, 6, 4)),
  k10: tile(p('M2 7L9 15L16 8V3')), k11: tile(c(9, 9, 7) + p('M9 9H16')), k12: tile(c(5, 13, 3) + c(13, 5, 3) + p('M5 13L13 5', '#396')), k13: tile(c(5, 12, 4) + p('M5 12L10 5', '#396', 'none', 2) + p('M8 3L17 12', '#333') + p('M7 3L12 6', R, 'none', 2)),
  k14: tile(p('M2 14L14 2V14', '#262') + c(6, 12, 4) + c(13, 10, 4)), k15: tile(p('M3 4H15M3 9Q4 16 9 16Q15 15 15 9', '#668') + p('M4 4H10M13 15L15 9', R)), k16: tile(c(9, 9, 7, '#7a8a6a')), k17: tile(p('M2 9L9 2L16 9L9 16Z') + p('M3 3L9 9M9 3L3 9', '#e06030', 'none', 1.5) + p('M9 16L16 9', '#396', 'none', 2)),
  k18: tile(p('M7 2H2V16H7V11H5V7H7ZM11 2H16V16H11V11H13V7H11Z', '#333')), k19: tile([[9, 3], [14, 5], [15, 11], [10, 15], [4, 14], [3, 5]].map(q => c(q[0], q[1], 1.5, '#444')).join('')), k20: tile(p('M3 1V15H17M1 4L3 1L5 4M14 13L17 15L14 17', '#222')),
  violet: r(0, 0, 18, 18, 'none', '#d8d4e4') + r(2, 2, 14, 14, 'none', '#8654e0'), k21: tile(r(4, 5, 10, 8, '#44c', '#c8c8f4') + p('M9 1V17M1 9H17', R)), k22: tile(p('M2 15Q7 0 9 7Q11 17 16 3', '#3a9050', 'none', 2)),
  k23: tile(p('M2 2Q8 6 8 16M7 2Q12 6 12 16', R) + p('M12 2Q17 6 16 16M1 6Q5 10 4 16', B, 'none', 1.5)), k24: p('M0 9H18', '#999') + p('M2 9L5 5L8 13L11 5L14 11L16 8', '#666')
};
const faint = { m1: 'M3 5H8V15H3ZM10 3V16M10 6H15V12H10', m2: 'M2 4H7L10 8M12 8H17L14 13Z', m4: 'M3 8Q7 0 11 9M8 8L11 12L14 7M3 14H7', m5: 'M2 9Q4 2 9 5L14 14M2 5V9H6', m7: 'M9 1V17M1 9H17M6 4L9 1L12 4M6 14L9 17L12 14M4 6L1 9L4 12M14 6L17 9L14 12', m8: 'M3 15L15 3', m9: 'M3 3H8Q10 4 9 8T15 15', m10: 'M1 14L5 6L8 13L12 4L13 10H17', m11: 'M9 2V16M2 10Q9 3 16 10', m14: 'M9 2V16M2 9H16', m16: 'M4 2V16M4 4H8V14H4M8 5H14V15H8M8 8H14M8 12H14' };
for (const k in faint) icons[k] = p(faint[k], '#b0b0b0');
icons.m3 = r(1, 1, 16, 16, R, '#fff') + p('M4 5H8L11 9M10 8H15L12 13Z', O);
icons.m6 = '<rect x="2" y="3" width="14" height="12" fill="none" stroke="#444" stroke-dasharray="2 2"/>';
icons.m12 = c(9, 9, 7, '#aaa') + c(9, 9, 1, '#aaa');
icons.m13 = c(9, 9, 6, '#aaa') + p('M9 1V5M9 13V17M1 9H5M13 9H17', '#aaa');
icons.m15 = c(9, 8, 6, '#bbb', '#e8e8e8') + p('M5 14L13 4', '#bbb');

document.querySelectorAll('[data-tools]').forEach(group => {
  group.innerHTML = group.dataset.tools.split(' ').map(t => {
    if (t === 'v' || t === 'V') return `<button class="caret${t === 'V' ? ' low' : ''}" aria-label="更多"></button>`;
    if (t === '»') return '<button class="over">»</button>';
    if (t === '.') return '<span class="gap"></span>';
    if (t[0] === '=') return `<button class="label">${t.slice(1)}</button>`;
    return `<button class="tool" aria-label="${t}"><svg viewBox="0 0 18 18">${icons[t]}</svg></button>`;
  }).join('');
});

const layers = [[1, 20], [3, 38], [4, 20], [5, 25], [6, 96], [7, 134], [8, 195], [10, 73], [13, 1], [14, 10], [15, 33], [16, 1]];
document.getElementById('layers').innerHTML = layers.map(([n, count], i) =>
  `<tr class="${i > 0 && i < 11 ? 'sel' : ''}"><td><div class="node"><input type="checkbox" id="layer${n}"><label for="layer${n}">${n}</label></div></td><td><input type="checkbox" aria-label="仅可见 ${n}"></td><td>${count}</td></tr>`).join('');

const kinds = ['冲', '冲', '冲', '冲', '切', '折', '成', '切', '折', '整', '切', '折', '切'];
const pink = '#f222e6', steel = '#cfdfe6';
let stations = '';
kinds.forEach((kind, i) => {
  const x = Math.round(284 + i * 44.6);
  const lug = i === 3 || i === 12 ? pink : '#d4e4f4';
  for (const y of [308, 402]) {
    stations += p(`M${x - 9} ${y - 2}H${x - 5}V${y - 5}H${x + 5}V${y - 2}H${x + 9}V${y + 2}H${x + 4}L${x} ${y + 5}L${x - 4} ${y + 2}H${x - 9}Z`, i === 3 || i === 12 ? '#909' : '#9ab', lug) + c(x, y, 1.5, '#22b', '#22b');
    const s = y < 350 ? 1 : -1, y0 = y + 4 * s;
    if (i < 4) stations += p(`M${x + 8} ${y0 + 1}H${x + 17}V${y0 - 2}H${x + 26}V${y0}H${x + 36}V${y0 + 1}H${x + 25}V${y0 + 3}H${x + 18}V${y0 + 1}`, '#333', i < 2 ? pink : '#777a60');
    else stations += p(`M${x + 7} ${y0 - s}L${x + 16} ${y0}L${x + 14} ${y0 + 5 * s}M${x - 7} ${y0 - s}L${x - 16} ${y0}L${x - 14} ${y0 + 5 * s}M${x + 10} ${y0 + s}H${x + 18}M${x - 18} ${y0 + s}H${x - 10}`, '#333', 'none', 1.5);
  }
  if (i === 0) stations += r(x - 1.5, 341, 3, 27, '#828', pink);
  if (i === 1) stations += r(x - 2, 341, 4, 27, '#445', '#d2e0e8');
  if (i === 2) stations += r(x - 1.5, 317, 3, 76, '#828', pink);
  if (i === 3) stations += p(`M${x + 2} 312V394`, '#445');
  if (i > 0 && i < 5) stations += p(`M${x - 5} 355.500H${x + 6}`, '#445');
  if (i === 9 || i === 12) stations += p(`M${x - 5} 336V366M${x + 5} 336V366`, '#a060a8', 'none', 1.5);
  stations += `<path d="M${x} 282V427" stroke="#1515c8" stroke-width="2" stroke-dasharray="9 3 2 3 2 3"/><path d="M${x} 431V460" stroke="#555" stroke-dasharray="6 4"/>`
    + `<ellipse cx="${x}" cy="469.500" rx="12" ry="9.500" fill="#ececec" stroke="#666"/>${p(`M${x - 12} 469.500H${x + 12}`, '#666')}`
    + `<text class="opname" x="${x}" y="468">OP${20 + i * 10}</text><text class="opkind" x="${x}" y="476">${kind}</text>`;
});
document.getElementById('stations').innerHTML = stations;

let parts = '';
for (let i = 0; i < 10; i++) {
  const x = Math.round(485 + i * 44.6), y = i ? 356 : 362;
  parts += `<g transform="translate(${x} ${y})" color="${[0, 2, 4].includes(i) ? pink : steel}"><use href="#part"/>${i > 1 ? '<use href="#ribs"/>' : ''}</g>`;
}
document.getElementById('parts').innerHTML = parts;
```
